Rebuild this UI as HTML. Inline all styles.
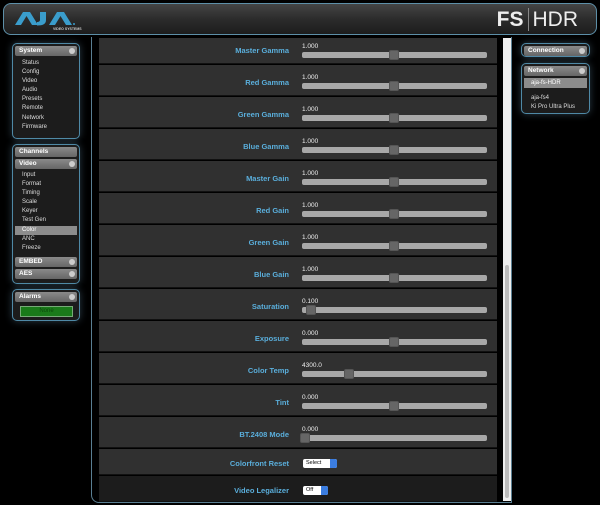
<!DOCTYPE html>
<html><head><style>
*{margin:0;padding:0;box-sizing:border-box}
body{width:600px;height:505px;background:#000;font-family:"Liberation Sans",sans-serif;position:relative;overflow:hidden}
.hdr{position:absolute;left:3px;top:3px;width:594px;height:32px;border:1px solid #5d8fa8;border-radius:8px;background:linear-gradient(#444,#2c2c2c 50%,#1c1c1c)}
.fs{position:absolute;right:18px;top:4px;color:#eee;font-size:21px;letter-spacing:0}
.fs b{font-weight:bold}
.fs span{border-left:1px solid #888;margin-left:4px;padding-left:4px}
.panel{position:absolute;border:1px solid #4f89a6;border-radius:5px;background:#1c1c1c;box-shadow:0 0 8px rgba(120,170,200,.35)}
.ph{height:10px;margin:2px;background:linear-gradient(#8a8a8a,#666);border-radius:2px;color:#fff;font-size:6.5px;font-weight:bold;padding-left:4px;line-height:10px;position:relative}
.ph i{position:absolute;right:2px;top:2px;width:6px;height:6px;border-radius:50%;background:#ccc}
.it{color:#ddd;font-size:6px;padding-left:9px;height:9.1px;line-height:9px}
.sel{background:#8c8c8c;margin:0 2px;padding-left:7px;color:#fff}
.main{position:absolute;left:91px;top:37px;width:421px;height:466px;border:1px solid #5a7f93;border-top:none;border-radius:0 0 0 8px;background:#000}
.row{position:absolute;left:7px;width:398px;background:#303030;border-bottom:1px solid #111}
.lab{position:absolute;right:208px;color:#5aaedb;font-size:7.5px;font-weight:bold;white-space:nowrap}
.val{position:absolute;left:203px;color:#eee;font-size:6.5px}
.trk{position:absolute;left:203px;width:185px;height:6px;background:#a8a8a8;border-radius:2px}
.th{position:absolute;top:-2px;width:10px;height:10px;background:#666;border:1px solid #555;border-radius:2px}
.dd{position:absolute;left:204px;height:9px;background:#fff;border-radius:2px;font-size:5.5px;color:#000;padding-left:3px;line-height:9px}
.dd i{position:absolute;right:0;top:0;width:7px;height:9px;background:#3b7de0;border-radius:0 2px 2px 0}
</style></head><body>
<div class="hdr">
<svg style="position:absolute;left:9px;top:5px" width="75" height="22" viewBox="0 0 75 22">
<g fill="#3a9dcc"><path d="M2 16 L10 3 L17 3 L25 16 L19 16 L13.5 7 L8 16Z"/><path d="M27 3h6v8c0 4-3 5.5-9 5.5v-3.5c2 0 3-1 3-2z"/><path d="M36 16 L44 3 L51 3 L59 16 L53 16 L47.5 7 L42 16Z"/><circle cx="61" cy="15" r="1"/></g>
<text x="40" y="21" font-size="3.5" fill="#ccc" font-family="Liberation Sans" font-weight="bold">VIDEO SYSTEMS</text></svg>
<div class="fs"><b>FS</b><span>HDR</span></div>
</div>
<div class="panel" style="left:12px;top:43px;width:68px;height:96px"><div class="ph">System<i></i></div>
<div class="it" style="margin-top:3px">Status</div><div class="it">Config</div><div class="it">Video</div><div class="it">Audio</div><div class="it">Presets</div><div class="it">Remote</div><div class="it">Network</div><div class="it">Firmware</div></div>
<div class="panel" style="left:12px;top:144px;width:68px;height:140px"><div class="ph">Channels</div><div class="ph">Video<i></i></div>
<div class="it" style="margin-top:2px">Input</div><div class="it">Format</div><div class="it">Timing</div><div class="it">Scale</div><div class="it">Keyer</div><div class="it">Test Gen</div><div class="it sel">Color</div><div class="it">ANC</div><div class="it">Freeze</div>
<div class="ph" style="margin-top:4px">EMBED<i></i></div><div class="ph">AES<i></i></div></div>
<div class="panel" style="left:12px;top:289px;width:68px;height:32px"><div class="ph">Alarms<i></i></div>
<div style="margin:4px 0 0 7px;width:53px;height:11px;background:#1a7a1a;border:1px solid #7a7;font-size:6px;color:#0b4a0b;text-align:center;line-height:9px">None</div></div>
<div class="panel" style="left:521px;top:43px;width:69px;height:14px"><div class="ph">Connection<i></i></div></div>
<div class="panel" style="left:521px;top:63px;width:69px;height:51px"><div class="ph">Network<i></i></div>
<div class="it sel" style="margin-top:1px;height:10px;line-height:10px">aja-fs-HDR</div>
<div class="it" style="margin-top:6px">aja-fs4</div><div class="it">Ki Pro Ultra Plus</div></div>
<div class="main">
<div style="position:absolute;left:411px;top:1px;width:8px;height:463px;background:#eee"><div style="position:absolute;left:2px;top:227px;width:4px;height:233px;background:#bbb;border-radius:2px"></div></div>
<div class="row" style="top:1px;height:26px"><div class="lab" style="top:8px">Master Gamma</div><div class="val" style="top:5px">1.000</div><div class="trk" style="top:14px"><div class="th" style="left:87px"></div></div></div>
<div class="row" style="top:28px;height:31px"><div class="lab" style="top:13px">Red Gamma</div><div class="val" style="top:9px">1.000</div><div class="trk" style="top:18px"><div class="th" style="left:87px"></div></div></div>
<div class="row" style="top:60px;height:31px"><div class="lab" style="top:13px">Green Gamma</div><div class="val" style="top:9px">1.000</div><div class="trk" style="top:18px"><div class="th" style="left:87px"></div></div></div>
<div class="row" style="top:92px;height:31px"><div class="lab" style="top:13px">Blue Gamma</div><div class="val" style="top:9px">1.000</div><div class="trk" style="top:18px"><div class="th" style="left:87px"></div></div></div>
<div class="row" style="top:124px;height:31px"><div class="lab" style="top:13px">Master Gain</div><div class="val" style="top:9px">1.000</div><div class="trk" style="top:18px"><div class="th" style="left:87px"></div></div></div>
<div class="row" style="top:156px;height:31px"><div class="lab" style="top:13px">Red Gain</div><div class="val" style="top:9px">1.000</div><div class="trk" style="top:18px"><div class="th" style="left:87px"></div></div></div>
<div class="row" style="top:188px;height:31px"><div class="lab" style="top:13px">Green Gain</div><div class="val" style="top:9px">1.000</div><div class="trk" style="top:18px"><div class="th" style="left:87px"></div></div></div>
<div class="row" style="top:220px;height:31px"><div class="lab" style="top:13px">Blue Gain</div><div class="val" style="top:9px">1.000</div><div class="trk" style="top:18px"><div class="th" style="left:87px"></div></div></div>
<div class="row" style="top:252px;height:31px"><div class="lab" style="top:13px">Saturation</div><div class="val" style="top:9px">0.100</div><div class="trk" style="top:18px"><div class="th" style="left:4px"></div></div></div>
<div class="row" style="top:284px;height:31px"><div class="lab" style="top:13px">Exposure</div><div class="val" style="top:9px">0.000</div><div class="trk" style="top:18px"><div class="th" style="left:87px"></div></div></div>
<div class="row" style="top:316px;height:31px"><div class="lab" style="top:13px">Color Temp</div><div class="val" style="top:9px">4300.0</div><div class="trk" style="top:18px"><div class="th" style="left:42px"></div></div></div>
<div class="row" style="top:348px;height:31px"><div class="lab" style="top:13px">Tint</div><div class="val" style="top:9px">0.000</div><div class="trk" style="top:18px"><div class="th" style="left:87px"></div></div></div>
<div class="row" style="top:380px;height:31px"><div class="lab" style="top:13px">BT.2408 Mode</div><div class="val" style="top:9px">0.000</div><div class="trk" style="top:18px"><div class="th" style="left:-2px"></div></div></div>
<div class="row" style="top:412px;height:26px"><div class="lab" style="top:10px">Colorfront Reset</div><div class="dd" style="top:10px;width:34px">Select<i></i></div></div>
<div class="row" style="top:439px;height:26px;background:#1c1c1c"><div class="lab" style="top:10px">Video Legalizer</div><div class="dd" style="top:10px;width:25px">Off<i></i></div></div>
</div>
</body></html>
